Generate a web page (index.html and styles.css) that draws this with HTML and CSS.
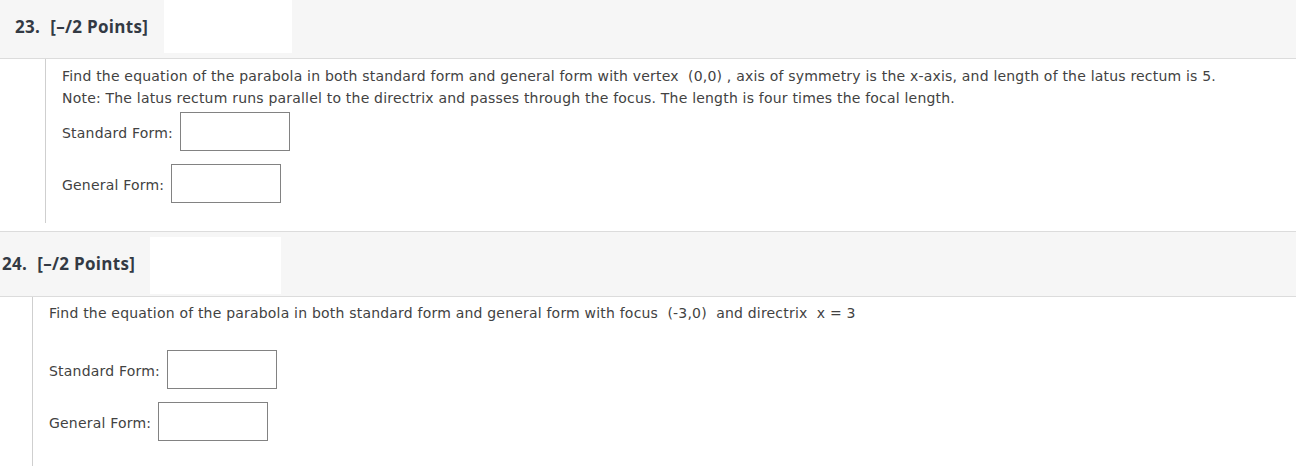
FILE: index.html
```html
<!DOCTYPE html>
<html>
<head>
<meta charset="utf-8">
<link rel="stylesheet" href="styles.css">
</head>
<body>
<div class="question q1">
  <div class="q-header">
    <div class="q-title"><span class="q-num">23.</span><span class="q-points">[–/2 Points]</span></div>
    <div class="q-blank"></div>
  </div>
  <div class="q-body">
    <p class="q-text">Find the equation of the parabola in both standard form and general form with vertex &nbsp;(0,0) , axis of symmetry is the x-axis, and length of the latus rectum is 5.</p>
    <p class="q-text">Note: The latus rectum runs parallel to the directrix and passes through the focus. The length is four times the focal length.</p>
    <div class="answer first"><span class="label">Standard Form:</span><span class="input"></span></div>
    <div class="answer"><span class="label">General Form:</span><span class="input"></span></div>
  </div>
</div>
<div class="question q2">
  <div class="q-header">
    <div class="q-title"><span class="q-num">24.</span><span class="q-points">[–/2 Points]</span></div>
    <div class="q-blank"></div>
  </div>
  <div class="q-body">
    <p class="q-text">Find the equation of the parabola in both standard form and general form with focus &nbsp;(-3,0) &nbsp;and directrix &nbsp;x = 3</p>
    <div class="answer first"><span class="label">Standard Form:</span><span class="input"></span></div>
    <div class="answer"><span class="label">General Form:</span><span class="input"></span></div>
  </div>
</div>
</body>
</html>
```
FILE: styles.css
```css
html, body {
  margin: 0;
  padding: 0;
  background: #fff;
}
body {
  width: 1296px;
  height: 466px;
  overflow: hidden;
  font-family: "DejaVu Sans", Verdana, sans-serif;
  color: #424242;
}
.q-header {
  display: flex;
  align-items: flex-start;
  background: #f6f6f6;
  border-bottom: 1px solid #dcdcdc;
}
.q-title {
  font-family: "Open Sans", sans-serif;
  font-weight: 700;
  font-size: 17px;
  letter-spacing: 0.3px;
  color: #333a44;
  box-sizing: border-box;
  white-space: nowrap;
}
.q-num {
  margin-right: 10px;
}
.q-blank {
  background: #fff;
  width: 128px;
}
.q1 .q-header {
  height: 58px;
}
.q1 .q-title {
  width: 164px;
  padding-left: 15px;
  line-height: 54px;
}
.q1 .q-blank {
  height: 53px;
}
.q2 .q-header {
  border-top: 1px solid #dcdcdc;
  margin-top: 8px;
  padding-top: 5px;
  height: 59px;
}
.q2 .q-title {
  width: 150px;
  padding-left: 2px;
  line-height: 54px;
}
.q2 .q-blank {
  width: 131px;
  height: 57px;
}
.q-body {
  border-left: 1px solid #cfcfcf;
  font-size: 14px;
  letter-spacing: 0.2px;
}
.q1 .q-body {
  margin-left: 45px;
  padding: 6px 0 20px 16px;
}
.q2 .q-body {
  margin-left: 32px;
  padding: 5px 0 30px 16px;
}
.q-text {
  margin: 0;
  line-height: 22px;
}
.answer {
  display: flex;
  align-items: center;
  gap: 7px;
  margin-top: 13px;
}
.q1 .answer.first {
  margin-top: 3px;
}
.q2 .answer.first {
  margin-top: 26px;
}
.label {
  padding-top: 3px;
}
.input {
  display: block;
  width: 108px;
  height: 37px;
  border: 1px solid #828282;
  background: #fff;
}
```
